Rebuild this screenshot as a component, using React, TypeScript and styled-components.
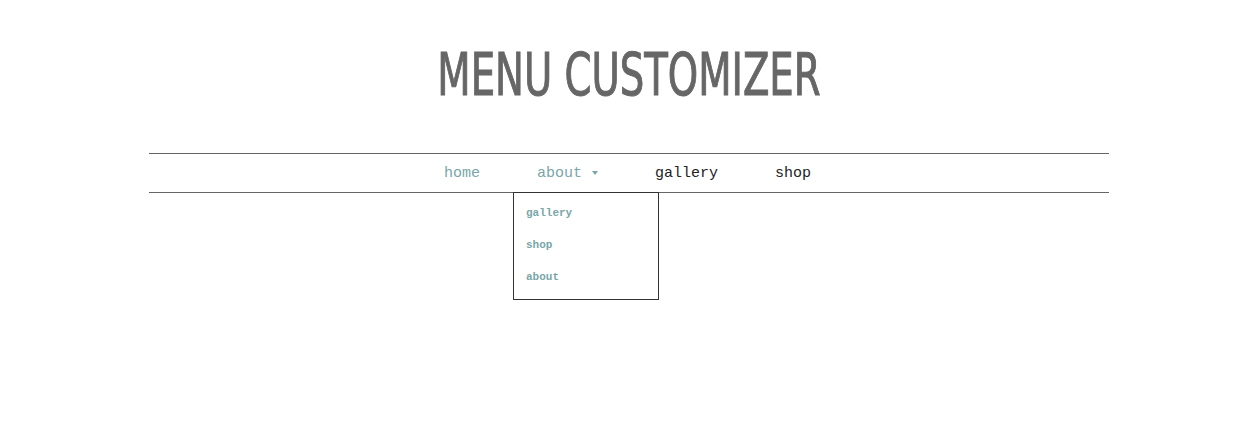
import React from "react";
import styled, { createGlobalStyle } from "styled-components";

const GlobalStyle = createGlobalStyle`
  html, body {
    margin: 0;
    padding: 0;
    background: #fff;
  }
`;

const Page = styled.div`
  width: 100%;
  min-height: 100vh;
  padding-top: 40px;
  box-sizing: border-box;
`;

const Title = styled.h1`
  margin: 0;
  text-align: center;
  font-family: "DejaVu Sans", sans-serif;
  font-stretch: condensed;
  font-weight: 400;
  font-size: 58px;
  line-height: 70px;
  color: #666;
  -webkit-text-stroke: 1px #666;
  text-transform: uppercase;
`;

const TitleText = styled.span`
  display: inline-block;
  transform: scaleX(0.74);
`;

const Navbar = styled.nav`
  width: 960px;
  margin: 43px auto 0;
  border-top: 1px solid #666;
  border-bottom: 1px solid #666;
`;

const MenuList = styled.ul`
  display: flex;
  justify-content: center;
  list-style: none;
  margin: 0;
  padding: 0 4px 0 0;
  height: 38px;
`;

const MenuItem = styled.li<{ $active?: boolean }>`
  position: relative;
  display: flex;
  align-items: center;
  padding: 0 28px 0 29px;
  font-family: "Liberation Mono", "DejaVu Sans Mono", monospace;
  font-size: 15px;
  color: ${({ $active }) => ($active ? "#7aa6a9" : "#222")};
  cursor: pointer;
`;

const Caret = styled.span`
  display: inline-block;
  margin-left: 10px;
  border-left: 3.5px solid transparent;
  border-right: 3.5px solid transparent;
  border-top: 4px solid #7aa6a9;
`;

const Dropdown = styled.div`
  position: absolute;
  top: 38px;
  left: 5px;
  width: 144px;
  padding: 10px 0 0;
  background: #fff;
  border: 1px solid #333;
  z-index: 2;
`;

const DropdownItem = styled.div`
  padding: 0 12px;
  height: 32px;
  line-height: 20px;
  font-family: "Liberation Mono", "DejaVu Sans Mono", monospace;
  font-size: 11px;
  font-weight: 700;
  color: #7aa6a9;
`;

const App = () => {
  return (
    <Page>
      <GlobalStyle />
      <Title>
        <TitleText>Menu Customizer</TitleText>
      </Title>
      <Navbar>
        <MenuList>
          <MenuItem $active>home</MenuItem>
          <MenuItem $active>
            about
            <Caret />
            <Dropdown>
              <DropdownItem>gallery</DropdownItem>
              <DropdownItem>shop</DropdownItem>
              <DropdownItem>about</DropdownItem>
            </Dropdown>
          </MenuItem>
          <MenuItem>gallery</MenuItem>
          <MenuItem>shop</MenuItem>
        </MenuList>
      </Navbar>
    </Page>
  );
};

export default App;
